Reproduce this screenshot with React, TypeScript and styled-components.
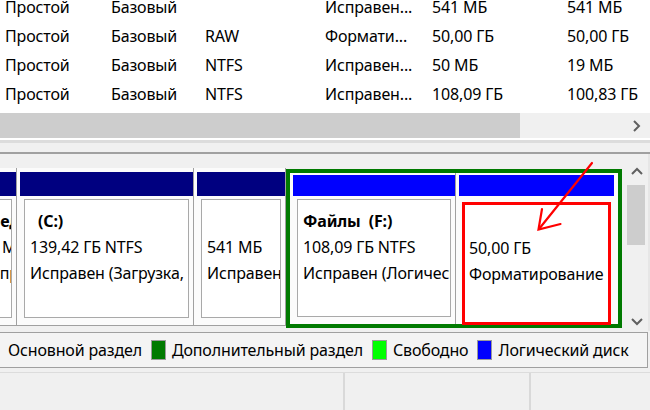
import React from 'react'
import styled, { createGlobalStyle } from 'styled-components'

const GlobalStyle = createGlobalStyle`
  html, body {
    margin: 0;
    padding: 0;
    background: #f0f0f0;
  }
  body {
    font-family: 'Noto Sans', 'Open Sans', sans-serif;
    font-size: 16px;
    letter-spacing: -0.15px;
    color: #000;
  }
  #root {
    width: 650px;
    height: 410px;
    overflow: hidden;
  }
`

const Window = styled.div`
  position: relative;
  width: 650px;
  height: 410px;
  display: flex;
  flex-direction: column;
  overflow: hidden;
  background: #f0f0f0;
`

// ---- volume list (top pane) ----

const TopPane = styled.div`
  height: 138px;
  flex: none;
  display: flex;
  flex-direction: column;
  background: #fff;
`

const ListViewport = styled.div`
  height: 113px;
  overflow: hidden;
`

const List = styled.div`
  margin-top: -8px;
`

const Row = styled.div`
  display: grid;
  grid-template-columns: 106px 94px 120px 107px 135px 1fr;
  height: 29px;
  align-items: center;
  white-space: nowrap;
`

const Cell = styled.div`
  padding-left: 5px;
  overflow: hidden;
`

const HScroll = styled.div`
  height: 25px;
  display: flex;
  align-items: center;
  background: #f0f0f0;
`

const HThumb = styled.div`
  width: 520px;
  height: 100%;
  background: #cdcdcd;
`

const ScrollArrow = styled.div`
  display: flex;
  align-items: center;
  justify-content: center;
  width: 20px;
  height: 20px;
  color: #606060;
`

const HArrowSlot = styled.div`
  flex: 1;
  display: flex;
  justify-content: flex-end;
  padding-right: 3px;
`

const Splitter = styled.div`
  height: 16px;
  flex: none;
  background: linear-gradient(
    to bottom,
    #ffffff 0px,
    #ffffff 2px,
    #dcdcdc 2px,
    #dcdcdc 5px,
    #f0f0f0 5px,
    #f0f0f0 14px,
    #a0a0a0 14px,
    #a0a0a0 16px
  );
`

// ---- graphical disk view (lower pane) ----

const LowerPane = styled.div`
  height: 177px;
  flex: none;
  display: flex;
  border-right: 2px solid #e6e6e6;
`

const DiskArea = styled.div`
  width: 627px;
  flex: none;
  display: flex;
  align-items: flex-start;
  padding-top: 14px;
  box-sizing: border-box;
  overflow: hidden;
`

const Partition = styled.div<{ $w: number; $nested?: boolean; $last?: boolean; $offset?: number }>`
  width: ${(p) => p.$w}px;
  height: ${(p) => (p.$nested ? 151 : 158)}px;
  flex: none;
  box-sizing: border-box;
  display: flex;
  flex-direction: column;
  margin-left: ${(p) => (p.$offset ? -p.$offset : 0)}px;
  padding: ${(p) => (p.$nested ? '2px' : '4px')} ${(p) => (p.$last ? '4px' : '0')} 0 3px;
  background: #fbfbfb;
  border-right: ${(p) => (p.$last ? 'none' : '1px solid #a0a0a0')};
  border-bottom: ${(p) => (p.$nested ? 'none' : '1px solid #a0a0a0')};
`

const Header = styled.div<{ $color: string; $h: number }>`
  height: ${(p) => p.$h}px;
  flex: none;
  background: ${(p) => p.$color};
`

const Body = styled.div`
  flex: 1;
  display: flex;
  padding: 3px 4px 7px 4px;
  min-height: 0;
`

const Inner = styled.div<{ $highlight?: boolean }>`
  flex: 1;
  min-width: 0;
  overflow: hidden;
  background: #fff;
  box-sizing: border-box;
  border: ${(p) => (p.$highlight ? '3px solid #ff0000' : '1px solid #a9a9a9')};
  padding: ${(p) => (p.$highlight ? '4px 4px' : '8px 5px')};
  margin: ${(p) => (p.$highlight ? '3px -1px -8px -1px' : '0')};
  line-height: 26px;
  white-space: pre;
`

const Label = styled.div`
  font-weight: 700;
  height: 26px;
`

const Line = styled.div`
  height: 26px;
`

const Extended = styled.div`
  width: 336px;
  flex: none;
  box-sizing: border-box;
  display: flex;
  margin-top: 1px;
  border: 4px solid #007a00;
  background: #fbfbfb;
`

const VScroll = styled.div`
  width: 20px;
  flex: none;
  display: flex;
  flex-direction: column;
  align-items: flex-start;
  background: #f0f0f0;
  padding-top: 8px;
`

const VThumb = styled.div`
  width: 18px;
  height: 60px;
  margin-top: 3px;
  background: #cdcdcd;
`

const VSpacer = styled.div`
  flex: 1;
`

// ---- legend & status ----

const Legend = styled.div`
  height: 36px;
  flex: none;
  margin-top: 1px;
  display: flex;
  align-items: center;
  padding-left: 8px;
  background: #f4f4f4;
  border-top: 1px solid #a0a0a0;
  border-bottom: 1px solid #a0a0a0;
  border-right: 1px solid #a0a0a0;
  width: 648px;
  box-sizing: border-box;
  white-space: nowrap;
`

const Swatch = styled.span<{ $color: string }>`
  display: inline-block;
  width: 13px;
  height: 18px;
  margin: 0 6px 0 9px;
  background: ${(p) => p.$color};
  border: 1px solid #9a9a9a;
`

const StatusBar = styled.div`
  flex: 1;
  margin-top: 4px;
  display: grid;
  grid-template-columns: 343px 186px 1fr;
  border-top: 1px solid #dcdcdc;
`

const StatusPanel = styled.div<{ $sep?: boolean }>`
  border-left: ${(p) => (p.$sep ? '2px solid #d9d9d9' : 'none')};
`

const Annotation = styled.svg`
  position: absolute;
  left: 0;
  top: 0;
  pointer-events: none;
`

const Chevron = ({ dir }: { dir: 'right' | 'up' | 'down' }) => {
  const d =
    dir === 'right' ? 'M3 1 L8 6 L3 11' : dir === 'up' ? 'M1 8 L6 3 L11 8' : 'M1 4 L6 9 L11 4'
  return (
    <svg width="12" height="12" viewBox="0 0 12 12">
      <path d={d} fill="none" stroke="currentColor" strokeWidth="2" />
    </svg>
  )
}

const rows = [
  ['Простой', 'Базовый', '', 'Исправен...', '541 МБ', '541 МБ'],
  ['Простой', 'Базовый', 'RAW', 'Формати...', '50,00 ГБ', '50,00 ГБ'],
  ['Простой', 'Базовый', 'NTFS', 'Исправен...', '50 МБ', '19 МБ'],
  ['Простой', 'Базовый', 'NTFS', 'Исправен...', '108,09 ГБ', '100,83 ГБ'],
]

const legend = [
  { color: '', text: 'Основной раздел' },
  { color: '#007a00', text: 'Дополнительный раздел' },
  { color: '#00ff00', text: 'Свободно' },
  { color: '#0000ff', text: 'Логический диск' },
]

export default function App() {
  return (
    <>
      <GlobalStyle />
      <Window>
        <TopPane>
          <ListViewport>
            <List>
              {rows.map((r, i) => (
                <Row key={i}>
                  {r.map((c, j) => (
                    <Cell key={j}>{c}</Cell>
                  ))}
                </Row>
              ))}
            </List>
          </ListViewport>
          <HScroll>
            <HThumb />
            <HArrowSlot>
              <ScrollArrow>
                <Chevron dir="right" />
              </ScrollArrow>
            </HArrowSlot>
          </HScroll>
        </TopPane>
        <Splitter />
        <LowerPane>
          <DiskArea>
            <Partition $w={50} $offset={33}>
              <Header $color="#000080" $h={24} />
              <Body>
                <Inner>
                  <Label>Среда восстановления</Label>
                  <Line>50 МБ NTFS</Line>
                  <Line>Исправен (Раздел восстановления)</Line>
                </Inner>
              </Body>
            </Partition>
            <Partition $w={177}>
              <Header $color="#000080" $h={24} />
              <Body>
                <Inner>
                  <Label>{'  (C:)'}</Label>
                  <Line>139,42 ГБ NTFS</Line>
                  <Line>Исправен (Загрузка, Файл подкачки, Аварийный дамп памяти)</Line>
                </Inner>
              </Body>
            </Partition>
            <Partition $w={92}>
              <Header $color="#000080" $h={24} />
              <Body>
                <Inner>
                  <Label />
                  <Line>541 МБ</Line>
                  <Line>Исправен (Раздел восстановления)</Line>
                </Inner>
              </Body>
            </Partition>
            <Extended>
              <Partition $w={166} $nested>
                <Header $color="#0000ff" $h={21} />
                <Body>
                  <Inner>
                    <Label>{'Файлы  (F:)'}</Label>
                    <Line>108,09 ГБ NTFS</Line>
                    <Line>Исправен (Логический диск)</Line>
                  </Inner>
                </Body>
              </Partition>
              <Partition $w={162} $nested $last>
                <Header $color="#0000ff" $h={21} />
                <Body>
                  <Inner $highlight>
                    <Label />
                    <Line>50,00 ГБ</Line>
                    <Line>Форматирование</Line>
                  </Inner>
                </Body>
              </Partition>
            </Extended>
          </DiskArea>
          <VScroll>
            <ScrollArrow>
              <Chevron dir="up" />
            </ScrollArrow>
            <VThumb />
            <VSpacer />
            <ScrollArrow>
              <Chevron dir="down" />
            </ScrollArrow>
          </VScroll>
        </LowerPane>
        <Legend>
          {legend.map((l, i) => (
            <React.Fragment key={i}>
              {l.color && <Swatch $color={l.color} />}
              <span>{l.text}</span>
            </React.Fragment>
          ))}
        </Legend>
        <StatusBar>
          <StatusPanel />
          <StatusPanel $sep />
          <StatusPanel $sep />
        </StatusBar>
        <Annotation width="650" height="410" viewBox="0 0 650 410">
          <g stroke="#ff0000" strokeWidth="2.2" fill="none" strokeLinecap="round">
            <line x1="592" y1="163" x2="539" y2="229" />
            <polyline points="542,209 538.5,229.5 560.5,224" />
          </g>
        </Annotation>
      </Window>
    </>
  )
}
